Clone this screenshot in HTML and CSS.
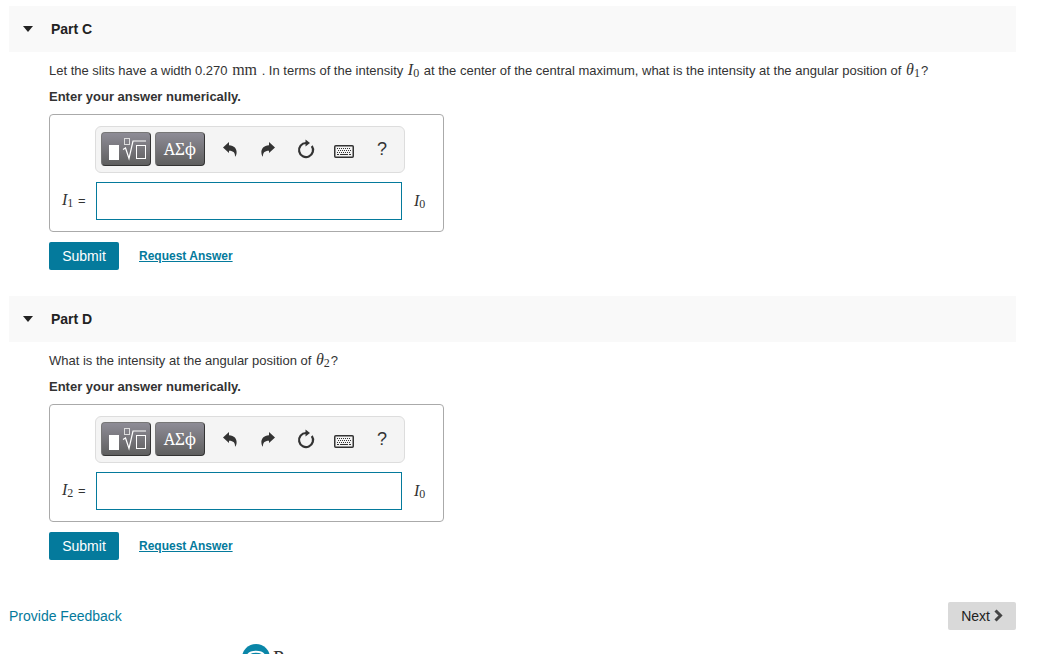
FILE: index.html
```html
<!DOCTYPE html>
<html lang="en">
<head>
    <meta charset="UTF-8">
    <meta name="viewport" content="width=device-width, initial-scale=1.0">
    <title>Single-Slit Diffraction</title>
    <link rel="stylesheet" href="styles.css">
</head>
<body>

<!-- Shared icons -->
<svg class="sprite" aria-hidden="true">
    <symbol id="icon-templates" viewBox="0 0 40 24">
        <rect x="3" y="8" width="10" height="15" fill="#fff"/>
        <rect x="18.5" y="1.5" width="5" height="6" fill="none" stroke="#ddd"/>
        <path d="M17 12.5l2.500-1.500 3.500 10.500 4-17.500H40" fill="none" stroke="#fff" stroke-width="1.200"/>
        <rect x="30.5" y="8.5" width="9" height="13" fill="none" stroke="#fff"/>
    </symbol>
    <symbol id="icon-undo" viewBox="0 0 14 15">
        <path d="M0 5.500L6 0v3.300c5.200.2 8 3.500 7.600 7.500-.1 1.600-.6 3-1.600 4 .3-3.700-1.400-6-6-6V11z" fill="#333"/>
    </symbol>
    <symbol id="icon-reset" viewBox="0 0 18 20">
        <path d="M10 4H9A7 7 0 1 0 14.800 7" fill="none" stroke="#333" stroke-width="2.200"/>
        <path d="M8.500 0.500L13 4 8.500 7.500z" fill="#333"/>
    </symbol>
    <symbol id="icon-keyboard" viewBox="0 0 20 13">
        <rect x="0.750" y="0.750" width="18.500" height="11.500" rx="1" fill="none" stroke="#333" stroke-width="1.500"/>
        <path d="M3 3.500h14M4 5.500h13M3 7.500h14" stroke="#333" stroke-dasharray="1 1"/>
        <path d="M3 9.500h2M6 9.500h8M15 9.500h2" stroke="#333"/>
    </symbol>
</svg>

<section class="part">
    <h2 class="part-header"><span class="arrow"></span>Part C</h2>
    <div class="part-body">
        <p class="prompt">Let the slits have a width 0.270 <span class="math">mm</span> . In terms of the intensity <span class="math"><i>I</i><sub>0</sub></span> at the center of the central maximum, what is the intensity at the angular position of <span class="math"><i>θ</i><sub>1</sub></span>?</p>
        <p class="prompt"><strong>Enter your answer numerically.</strong></p>
        <div class="answer-box">
            <div class="toolbar">
                <button class="tool-dark" type="button" aria-label="Templates"><svg width="40" height="24"><use href="#icon-templates"/></svg></button>
                <button class="tool-dark" type="button">ΑΣϕ</button>
                <div class="tools">
                    <button class="tool" type="button" aria-label="Undo"><svg width="14" height="15"><use href="#icon-undo"/></svg></button>
                    <button class="tool" type="button" aria-label="Redo"><svg class="flip" width="14" height="15"><use href="#icon-undo"/></svg></button>
                    <button class="tool" type="button" aria-label="Reset"><svg width="18" height="20"><use href="#icon-reset"/></svg></button>
                    <button class="tool tool-keys" type="button" aria-label="Keyboard shortcuts"><svg width="20" height="13"><use href="#icon-keyboard"/></svg></button>
                    <button class="tool" type="button">?</button>
                </div>
            </div>
            <div class="answer-row">
                <label class="answer-label" for="answer-c"><span class="math"><i>I</i><sub>1</sub></span> =</label>
                <input class="answer-input" id="answer-c" type="text">
                <span class="math"><i>I</i><sub>0</sub></span>
            </div>
        </div>
        <div class="actions">
            <button class="submit" type="submit">Submit</button>
            <a class="request" href="#">Request Answer</a>
        </div>
    </div>
</section>

<section class="part">
    <h2 class="part-header"><span class="arrow"></span>Part D</h2>
    <div class="part-body">
        <p class="prompt">What is the intensity at the angular position of <span class="math"><i>θ</i><sub>2</sub></span>?</p>
        <p class="prompt"><strong>Enter your answer numerically.</strong></p>
        <div class="answer-box">
            <div class="toolbar">
                <button class="tool-dark" type="button" aria-label="Templates"><svg width="40" height="24"><use href="#icon-templates"/></svg></button>
                <button class="tool-dark" type="button">ΑΣϕ</button>
                <div class="tools">
                    <button class="tool" type="button" aria-label="Undo"><svg width="14" height="15"><use href="#icon-undo"/></svg></button>
                    <button class="tool" type="button" aria-label="Redo"><svg class="flip" width="14" height="15"><use href="#icon-undo"/></svg></button>
                    <button class="tool" type="button" aria-label="Reset"><svg width="18" height="20"><use href="#icon-reset"/></svg></button>
                    <button class="tool tool-keys" type="button" aria-label="Keyboard shortcuts"><svg width="20" height="13"><use href="#icon-keyboard"/></svg></button>
                    <button class="tool" type="button">?</button>
                </div>
            </div>
            <div class="answer-row">
                <label class="answer-label" for="answer-d"><span class="math"><i>I</i><sub>2</sub></span> =</label>
                <input class="answer-input" id="answer-d" type="text">
                <span class="math"><i>I</i><sub>0</sub></span>
            </div>
        </div>
        <div class="actions">
            <button class="submit" type="submit">Submit</button>
            <a class="request" href="#">Request Answer</a>
        </div>
    </div>
</section>

<div class="bottom-nav">
    <a class="feedback" href="#">Provide Feedback</a>
    <button class="next" type="button">Next <svg width="9" height="13" viewBox="0 0 9 13"><path d="M1.500 1.500l5 5-5 5" fill="none" stroke="#444" stroke-width="3"/></svg></button>
</div>

<footer class="footer">
    <svg width="28" height="28" viewBox="0 0 28 28">
        <circle cx="14" cy="14" r="14" fill="#0a86a8"/>
        <path d="M5 13c2-7 16-7 18 0" fill="none" stroke="#fff" stroke-width="2"/>
    </svg>
    <span class="brand">Pearson</span>
</footer>

</body>
</html>
```
FILE: styles.css
```css
* {
    box-sizing: border-box;
}
body {
    font-family: "Liberation Sans", Arial, sans-serif;
    font-size: 13px;
    line-height: 20px;
    color: #333;
    background-color: #fff;
    margin: 0;
    padding: 6px 21px 0 9px;
    height: 100vh;
    overflow: hidden;
}
button {
    font-family: inherit;
    border: none;
    padding: 0;
    cursor: pointer;
}
.sprite {
    display: none;
}

/* Parts */
.part {
    margin-bottom: 26px;
}
.part-header {
    display: flex;
    align-items: center;
    gap: 18px;
    height: 46px;
    margin: 0;
    padding-left: 14px;
    background-color: #f9f9f9;
    color: #222;
    font-size: 14px;
}
.arrow {
    border-top: 6px solid #222;
    border-left: 5px solid transparent;
    border-right: 5px solid transparent;
}
.part-body {
    padding: 9px 0 0 40px;
}
.prompt {
    margin: 0 0 6px;
}
.math {
    padding: 0 1px;
    font-family: "Liberation Serif", "Times New Roman", serif;
    font-size: 16px;
    line-height: 16px;
    white-space: nowrap;
}
.math sub {
    font-size: 12px;
    line-height: 0;
    vertical-align: -2px;
}

/* Answer box */
.answer-box {
    width: 395px;
    max-width: 100%;
    margin-top: 7px;
    padding: 11px;
    border: 1px solid #aaa;
    border-radius: 4px;
}
.toolbar {
    display: flex;
    align-items: flex-start;
    gap: 4px;
    width: 310px;
    height: 47px;
    margin: 0 0 9px 34px;
    padding: 5px 0 5px 5px;
    background-color: #f4f4f4;
    border: 1px solid #ddd;
    border-radius: 6px;
}
.tool-dark {
    display: flex;
    align-items: center;
    justify-content: center;
    flex-shrink: 0;
    width: 50px;
    height: 34px;
    background-image: linear-gradient(#8e8c96, #5f5f5f);
    border: 1px solid #333;
    border-top-color: #777;
    border-left-color: #777;
    border-radius: 4px;
    color: #fff;
    font-family: "Noto Serif", "DejaVu Serif", "Liberation Serif", serif;
    font-size: 16px;
    line-height: 16px;
}
.tools {
    display: flex;
    margin-left: 2px;
}
.tool {
    display: flex;
    align-items: center;
    justify-content: center;
    width: 38px;
    height: 34px;
    background: none;
    color: #333;
    font-size: 18px;
}
.tool-keys {
    padding-top: 4px;
}
.flip {
    transform: scaleX(-1);
}
.answer-row {
    display: flex;
    align-items: center;
}
.answer-label {
    width: 35px;
}
.answer-input {
    width: 306px;
    height: 38px;
    margin-right: 11px;
    padding: 0 8px;
    border: 1px solid #047a9c;
    font-size: 16px;
}

/* Submit row */
.actions {
    display: flex;
    align-items: center;
    gap: 20px;
    margin-top: 10px;
}
.submit {
    width: 70px;
    height: 28px;
    background-color: #047a9c;
    border-radius: 2px;
    color: #fff;
    font-size: 14px;
}
.request {
    color: #047a9c;
    font-size: 12px;
    font-weight: bold;
}

/* Bottom */
.bottom-nav {
    display: flex;
    justify-content: space-between;
    align-items: center;
    margin-top: 42px;
}
.feedback {
    color: #047a9c;
    font-size: 14px;
    text-decoration: none;
}
.next {
    width: 68px;
    height: 28px;
    background-color: #d9d9d9;
    border-radius: 2px;
    color: #222;
    font-size: 14px;
}
.next svg {
    vertical-align: -1px;
}
.footer {
    display: flex;
    align-items: center;
    gap: 3px;
    margin-top: 14px;
    padding-left: 233px;
}
.brand {
    font-family: "Liberation Serif", serif;
    font-size: 20px;
}
```
